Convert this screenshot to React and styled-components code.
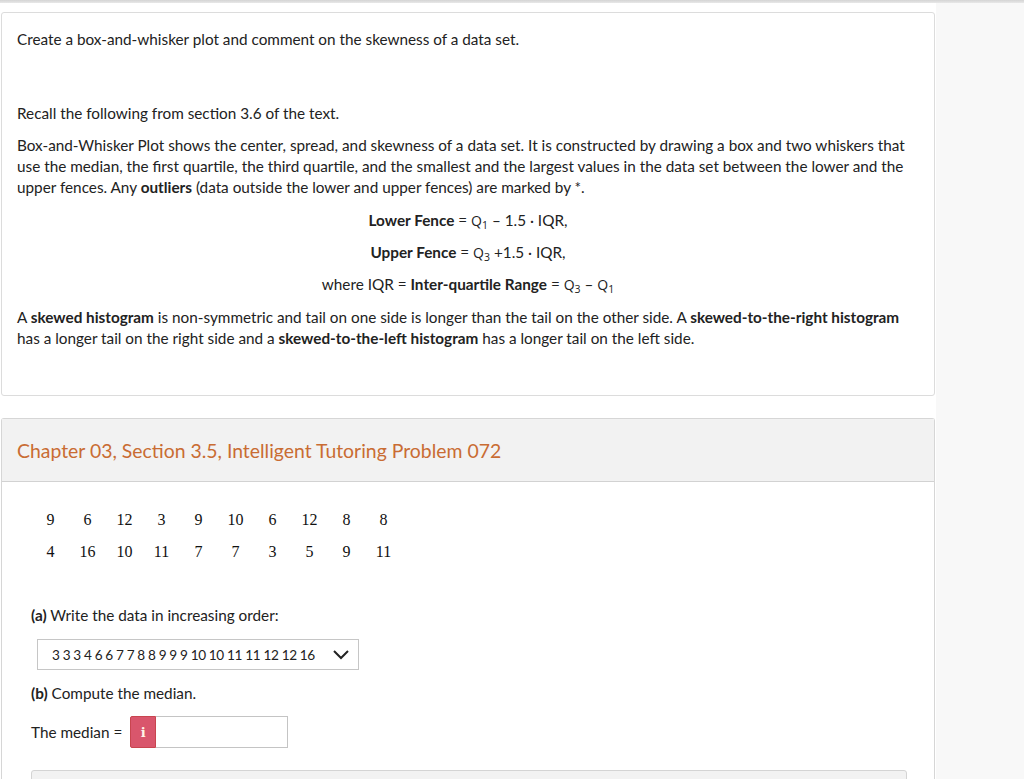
import React from "react";
import styled, { createGlobalStyle } from "styled-components";

const GlobalStyle = createGlobalStyle`
	html, body {
		margin: 0;
		padding: 0;
		background: #f8f8f8;
		overflow: hidden;
	}
	body {
		font-family: Lato, "Liberation Sans", sans-serif;
		color: #222;
		font-size: 15.3px;
	}
`;

const rowsOfData = [
	[9, 6, 12, 3, 9, 10, 6, 12, 8, 8],
	[4, 16, 10, 11, 7, 7, 3, 5, 9, 11],
];

function App() {
	return (
		<>
			<GlobalStyle />
			<TopBar />
			<Page>
				<Main>
					<Card>
						<Intro>Create a box-and-whisker plot and comment on the skewness of a data set.</Intro>
						<Para>Recall the following from section 3.6 of the text.</Para>
						<Para gap={12}>
							Box-and-Whisker Plot shows the center, spread, and skewness of a data set. It is constructed by drawing a box and two whiskers that<br />
							use the median, the first quartile, the third quartile, and the smallest and the largest values in the data set between the lower and the<br />
							upper fences. Any <b>outliers</b> (data outside the lower and upper fences) are marked by *.
						</Para>
						<Formula>
							<b>Lower Fence</b> = <Q>Q<sub>1</sub></Q> – 1.5 · IQR,
						</Formula>
						<Formula>
							<b>Upper Fence</b> = <Q>Q<sub>3</sub></Q> +1.5 · IQR,
						</Formula>
						<Formula gap={12}>
							where IQR = <b>Inter-quartile Range</b> = <Q>Q<sub>3</sub></Q> – <Q>Q<sub>1</sub></Q>
						</Formula>
						<Para>
							A <b>skewed histogram</b> is non-symmetric and tail on one side is longer than the tail on the other side. A <b>skewed-to-the-right histogram</b><br />
							has a longer tail on the right side and a <b>skewed-to-the-left histogram</b> has a longer tail on the left side.
						</Para>
					</Card>

					<ProblemCard>
						<ProblemHeader>Chapter 03, Section 3.5, Intelligent Tutoring Problem 072</ProblemHeader>
						<ProblemBody>
							<DataTable>
								<tbody>
									{rowsOfData.map((row, i) => (
										<tr key={i}>
											{row.map((n, j) => (
												<DataCell key={j}>{n}</DataCell>
											))}
										</tr>
									))}
								</tbody>
							</DataTable>

							<Question>
								<b>(a)</b> Write the data in increasing order:
							</Question>
							<Select>
								<span>3 3 3 4 6 6 7 7 8 8 9 9 9 10 10 11 11 12 12 16</span>
								<svg width="18" height="12" viewBox="0 0 18 12">
									<path d="M2 2 L9 9 L16 2" fill="none" stroke="#222" strokeWidth="2" />
								</svg>
							</Select>

							<Question>
								<b>(b)</b> Compute the median.
							</Question>
							<AnswerRow>
								<span>The median =</span>
								<InputGroup>
									<InfoTag>i</InfoTag>
									<AnswerInput />
								</InputGroup>
							</AnswerRow>
							<NextBox />
						</ProblemBody>
					</ProblemCard>
				</Main>
				<Side />
			</Page>
		</>
	);
}

export default App;

const TopBar = styled.div`
	height: 3px;
	background: linear-gradient(#d4d4d4, #e8e8e8);
`;

const Page = styled.div`
	display: flex;
	height: 776px;
	overflow: hidden;
`;

const Main = styled.div`
	width: 936px;
	background: #fff;
	padding-top: 9px;
	box-sizing: border-box;
`;

const Side = styled.div`
	flex: 1;
	background: #f8f8f8;
`;

const Card = styled.div`
	margin-left: 1px;
	width: 934px;
	height: 384px;
	box-sizing: border-box;
	border: 1px solid #dcdcdc;
	border-radius: 3px;
	padding: 16px 15px 0 15px;
	line-height: 21px;
	white-space: nowrap;
`;

const Intro = styled.p`
	margin: 0 0 53px;
`;

const Para = styled.p`
	margin: 0 0 ${(p) => p.gap || 11}px;
`;

const Formula = styled.p`
	margin: 0 0 ${(p) => p.gap || 11}px;
	text-align: center;

	b {
		font-weight: 700;
	}
`;

const Q = styled.span`
	font-family: "Open Sans", "DejaVu Sans", sans-serif;
	font-size: 14px;

	sub {
		font-size: 10.5px;
		vertical-align: -3px;
		line-height: 0;
	}
`;

const ProblemCard = styled.div`
	margin: 22px 0 0 1px;
	width: 934px;
	box-sizing: border-box;
	border: 1px solid #d6d6d6;
	border-bottom: none;
	border-radius: 3px 3px 0 0;
`;

const ProblemHeader = styled.div`
	height: 62px;
	background: #f2f2f2;
	border-bottom: 1px solid #d2d2d2;
	display: flex;
	align-items: center;
	padding: 0 15px;
	font-size: 19.4px;
	color: #c96c33;
`;

const ProblemBody = styled.div`
	padding: 22px 29px 0 29px;
	height: 320px;
`;

const DataTable = styled.table`
	border-collapse: collapse;
	margin-left: 1px;
`;

const DataCell = styled.td`
	width: 37px;
	height: 32px;
	padding: 0;
	text-align: center;
	font-family: "Liberation Serif", serif;
	font-size: 16px;
	color: #111;
`;

const Question = styled.div`
	margin-top: 37px;
	line-height: 21px;
`;

const Select = styled.div`
	margin: 13px 0 0 6px;
	width: 322px;
	height: 31px;
	box-sizing: border-box;
	border: 1px solid #c6c6c6;
	display: flex;
	align-items: center;
	justify-content: space-between;
	padding: 0 8px 0 14px;
	font-size: 13.6px;
	letter-spacing: -0.35px;
	color: #222;

	& + ${Question} {
		margin-top: 13px;
	}
`;

const AnswerRow = styled.div`
	display: flex;
	align-items: center;
	gap: 8px;
	margin-top: 12px;
`;

const InputGroup = styled.div`
	display: flex;
	height: 32px;
`;

const InfoTag = styled.div`
	width: 26px;
	background: #d9566c;
	border: 1px solid #c8454f;
	border-radius: 2px 0 0 2px;
	box-sizing: border-box;
	color: #fff5e8;
	font-family: "DejaVu Serif", serif;
	font-weight: 700;
	font-size: 13px;
	display: flex;
	align-items: center;
	justify-content: center;
`;

const AnswerInput = styled.input`
	width: 132px;
	border: 1px solid #c4c4c4;
	border-left: none;
	box-sizing: border-box;
	margin: 0;
	padding: 0 6px;
	font: inherit;
	outline: none;
`;

const NextBox = styled.div`
	margin: 22px 0 0 0;
	width: 874px;
	height: 40px;
	background: #f2f2f2;
	border: 1px solid #d4d4d4;
	border-radius: 3px;
`;
